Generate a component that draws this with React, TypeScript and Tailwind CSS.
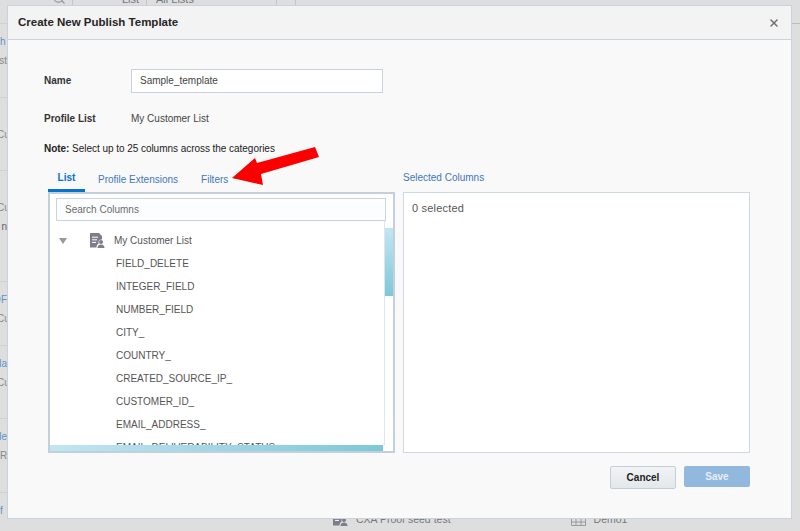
import { Search, X } from 'lucide-react';

const columns = [
  'FIELD_DELETE',
  'INTEGER_FIELD',
  'NUMBER_FIELD',
  'CITY_',
  'COUNTRY_',
  'CREATED_SOURCE_IP_',
  'CUSTOMER_ID_',
  'EMAIL_ADDRESS_',
  'EMAIL_DELIVERABILITY_STATUS',
];

// rows of the page behind the dialog, only the end that sticks out shows
const behindRows = [
  { h: 'h-[74px]', title: 'h', titleClass: 'self-start', sub: 'st', subClass: 'self-end', extra: '' },
  { h: 'h-[73px]', title: '', titleClass: '', sub: 'Cu', subClass: 'self-start -ml-[3px]', extra: '' },
  { h: 'h-[111px]', title: '', titleClass: '', sub: 'Cu', subClass: 'self-start -ml-[3px]', extra: 'n' },
  { h: 'h-[64px]', title: 'OF', titleClass: 'self-end', sub: 'Cu', subClass: 'self-start -ml-[3px]', extra: '' },
  { h: 'h-[73px]', title: 'la', titleClass: 'self-end', sub: 'Cu', subClass: 'self-start -ml-[3px]', extra: '' },
  { h: 'h-[74px]', title: 'le', titleClass: 'self-end', sub: 'RI', subClass: 'self-start', extra: '' },
  { h: 'h-[39px]', title: 'f', titleClass: 'self-start', sub: '', subClass: '', extra: '' },
];

function ListIcon() {
  return (
    <svg width="15" height="15" viewBox="0 0 15 15" className="shrink-0">
      <path d="M0 0h9l3 3v3.6A3 3 0 0 0 8.6 10.6c-1.3.7-2 2-2.1 3.9H0z" fill="#7f7d8b" />
      <path d="M2 4.2h6M2 6.8h5M2 9.4h4" stroke="#fff" strokeWidth="1" />
      <circle cx="11" cy="9" r="2" fill="#7f7d8b" />
      <path d="M7.5 15c0-2.4 1.4-3.6 3.5-3.6s3.5 1.2 3.5 3.6z" fill="#7f7d8b" />
    </svg>
  );
}

function GridIcon() {
  return (
    <svg width="15" height="12" viewBox="0 0 15 12" fill="none" stroke="#9a9a9a">
      <path d="M.5 .5h14v11H.5zM.5 4h14M.5 8h14M5 .5v11M10 .5v11" />
    </svg>
  );
}

export default function App() {
  return (
    <div className="relative w-[800px] h-[531px] overflow-hidden bg-[#dedede] font-['Liberation_Sans',Arial,sans-serif] text-[#555]">
      {/* Page behind the dialog */}
      <div className="flex h-[5px] overflow-hidden pl-[52px] text-[11px] text-[#777]">
        <div className="w-[20px] -mt-[9px]"><Search size={14} className="text-[#999]" /></div>
        <div className="w-[74px] border-l border-[#c4c4c4] pl-[49px]"><span className="block -mt-[7px] leading-[13px]">List</span></div>
        <div className="w-[130px] border-l border-[#c4c4c4] pl-[9px]"><span className="block -mt-[7px] leading-[13px]">All Lists</span></div>
        <div className="w-[20px] border-x border-[#c4c4c4]" />
      </div>
      <div className="w-[7px] mt-[18px]">
        {behindRows.map((row, i) => (
          <div key={i} className={`${row.h} border-t border-[#c9d3dc] overflow-hidden flex flex-col items-end text-[10px] leading-[19px] pt-[8px]`}>
            <span className={`h-[19px] text-[#5f93c5] whitespace-nowrap ${row.titleClass}`}>{row.title}</span>
            <span className={`h-[19px] text-[#888] whitespace-nowrap ${row.subClass}`}>{row.sub}</span>
            <span className="h-[19px] text-[#666] whitespace-nowrap">{row.extra}</span>
          </div>
        ))}
      </div>
      <div className="absolute right-0 top-[23px] w-[9px] border-t border-[#bdbdbd]" />
      <div className="absolute left-[333px] top-[510px] flex items-center text-[10.5px] text-[#777]">
        <ListIcon />
        <span className="ml-[8px] mt-[2px]">CXA Proof seed test</span>
        <span className="ml-[120px] mt-[3px]"><GridIcon /></span>
        <span className="ml-[8px] mt-[2px]">Demo1</span>
      </div>

      {/* Dialog */}
      <div className="absolute left-[7px] top-[5px] w-[785px] h-[514px] bg-[#f9f9f9] border border-[#c9d3e0]">
        <div className="h-[34px] flex items-center justify-between pl-[10px] pr-[11px] bg-[#f3f3f3] border-b border-[#c9d3dc]">
          <h1 className="text-[11.5px] font-bold text-[#252525]">Create New Publish Template</h1>
          <X size={12} strokeWidth={3} className="text-[#6f6f6f]" />
        </div>

        <div className="pl-[36px] pt-[29px]">
          <div className="flex items-center h-[24px]">
            <span className="w-[87px] pb-[2px] text-[10px] font-bold text-[#333]">Name</span>
            <div className="w-[252px] h-[24px] bg-white border border-[#c9d1da] pl-[8px] pb-[2px] flex items-center text-[10px] text-[#444]">
              Sample_template
            </div>
          </div>
          <div className="flex items-center h-[14px] mt-[18px]">
            <span className="w-[87px] text-[10px] font-bold text-[#333]">Profile List</span>
            <span className="text-[10px] text-[#444]">My Customer List</span>
          </div>
          <p className="mt-[17px] text-[10px] leading-[14px] tracking-[-0.04px] text-[#222]">
            <span className="font-bold">Note:</span> Select up to 25 columns across the categories
          </p>

          <div className="flex ml-[4px] mt-[9px]">
            {/* Column picker */}
            <div className="w-[347px]">
              <div className="flex h-[27px] text-[10px]">
                <div className="w-[37px] border-b-[3px] border-[#0572ce] text-center font-bold text-[#0572ce] pt-[5px]">List</div>
                <div className="ml-[13px] pt-[7px] text-[#3f77c0]">Profile Extensions</div>
                <div className="ml-[23px] pt-[7px] text-[#3f77c0]">Filters</div>
              </div>
              <div className="relative h-[261px] bg-white border-2 border-[#c3cfdb] overflow-hidden">
                <div className="ml-[6px] mr-[7px] mt-[4px] h-[23px] border border-[#c9d3dd] bg-[#fcfdfe] pl-[8px] flex items-center text-[10px] text-[#6b6b6b]">
                  Search Columns
                </div>
                <div className="flex items-center h-[23px] mt-[8px] text-[10px] text-[#555]">
                  <span className="ml-[9px] w-0 h-0 border-x-[4px] border-x-transparent border-t-[6px] border-t-[#999]" />
                  <span className="ml-[23px]"><ListIcon /></span>
                  <span className="ml-[9px]">My Customer List</span>
                </div>
                {columns.map((c) => (
                  <div key={c} className="h-[23px] pl-[66px] flex items-center text-[10px] text-[#555] whitespace-nowrap">{c}</div>
                ))}
                {/* Scrollbars */}
                <div className="absolute right-[8px] top-[27px] bottom-[6px] w-px bg-[#dfe5ea]" />
                <div className="absolute right-0 top-[34px] h-[68px] w-[8px] bg-gradient-to-b from-[#c2e5f3] to-[#7cc8d8]" />
                <div className="absolute left-0 bottom-0 h-[6px] w-[333px] bg-gradient-to-r from-[#c2e5f3] to-[#7cc8d8]" />
              </div>
            </div>

            {/* Selected columns */}
            <div className="ml-[8px] w-[347px]">
              <div className="h-[27px] pt-[5px] text-[10px] text-[#3f77c0]">Selected Columns</div>
              <div className="h-[261px] bg-white border border-[#cfd8e0] pl-[8px] pt-[8px] text-[11px] leading-[14px] tracking-[0.2px] text-[#555]">0 selected</div>
            </div>
          </div>

          <div className="flex justify-end w-[706px] mt-[13px]">
            <button className="w-[66px] h-[23px] rounded-[2px] border border-[#c4ced7] bg-gradient-to-b from-[#f1f3f5] to-[#e4e8eb] text-[10px] font-bold text-[#222]">Cancel</button>
            <button className="ml-[8px] w-[66px] h-[21px] rounded-[2px] bg-[#93b8de] text-[10px] font-bold text-[#e6eef6]">Save</button>
          </div>
        </div>
      </div>

      {/* Red callout arrow over the tabs */}
      <svg className="absolute left-[230px] top-[145px]" width="92" height="42" viewBox="230 145 92 42">
        <path d="M315 147 319 157 261 174 263 185 232 178 255 158 257 163Z" fill="#fa0000" />
      </svg>
    </div>
  );
}
